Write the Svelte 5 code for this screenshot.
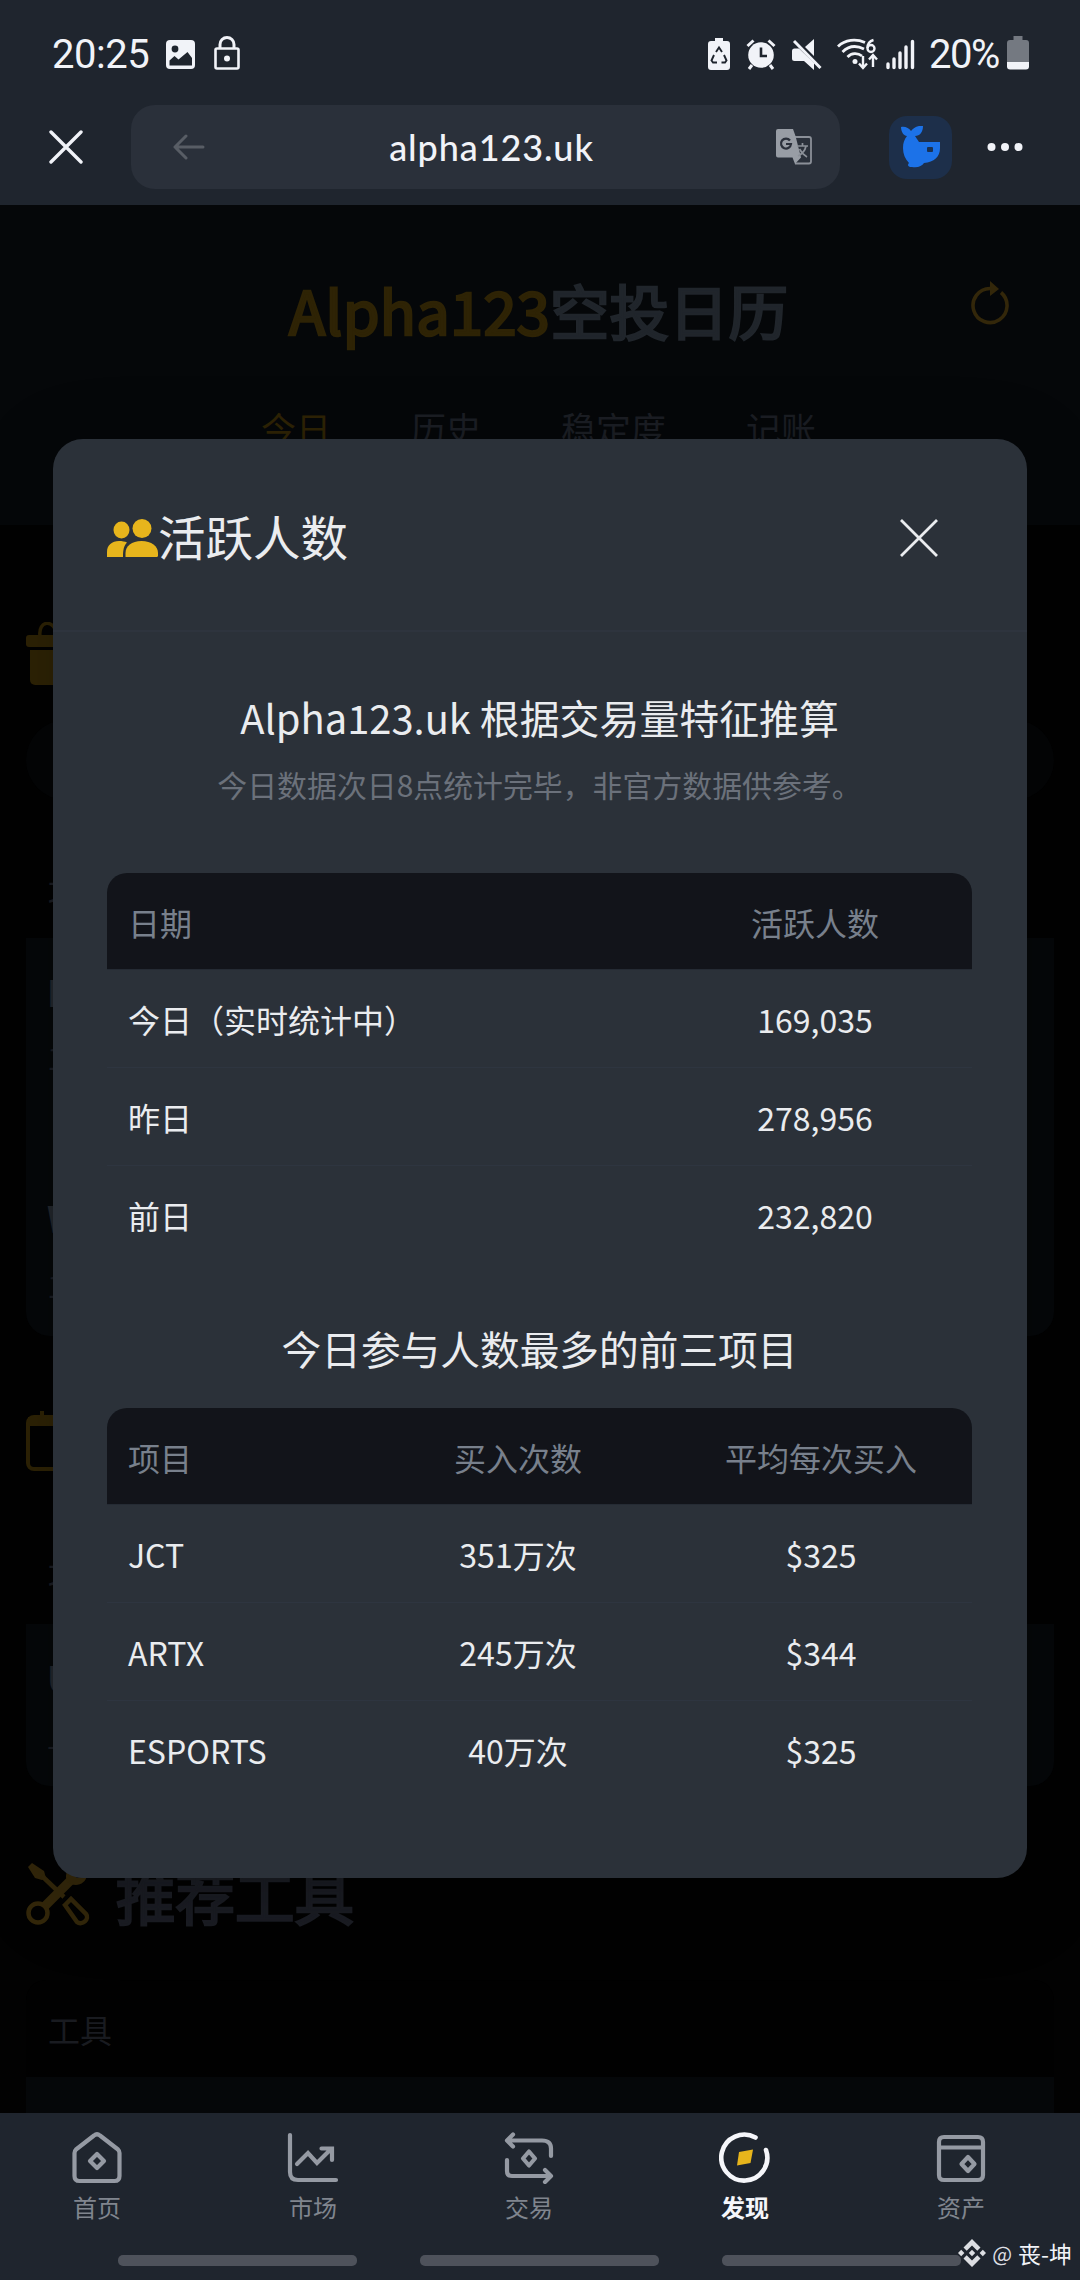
<script>
	let days = [
		{ date: "今日（实时统计中）", count: "169,035" },
		{ date: "昨日", count: "278,956" },
		{ date: "前日", count: "232,820" },
	];

	let projects = [
		{ name: "JCT", buys: "351万次", avg: "$325" },
		{ name: "ARTX", buys: "245万次", avg: "$344" },
		{ name: "ESPORTS", buys: "40万次", avg: "$325" },
	];

	let tabs = ["今日", "历史", "稳定度", "记账"];

	let navItems = [
		{ id: "home", label: "首页" },
		{ id: "market", label: "市场" },
		{ id: "trade", label: "交易" },
		{ id: "discover", label: "发现" },
		{ id: "assets", label: "资产" },
	];

	let activeTab = "今日";
	let activeNav = "discover";
	let showModal = true;
</script>

<div class="phone">
	<div class="status">
		<span class="time">20:25</span>
		<svg class="pic" width="29" height="29" viewBox="0 0 29 29">
			<rect width="29" height="29" rx="4" fill="#f1f3f8" />
			<circle cx="9" cy="9" r="3.4" fill="#1f252e" />
			<path d="M3.5 20.5 8.5 16l4 3.5L21.500 12l4.500 6v7.500h-22.500z" fill="#1f252e" />
		</svg>
		<svg class="lock" width="26" height="34" viewBox="0 0 26 34" fill="none" stroke="#f1f3f8">
			<path d="M6 12V8.500a7 7 0 0 1 14 0V12" stroke-width="3" />
			<rect x="1.500" y="12.500" width="23" height="20" rx="1.500" stroke-width="2.600" />
			<circle cx="13" cy="22.500" r="3" fill="#f1f3f8" stroke="none" />
		</svg>

		<div class="signals">
			<svg width="22" height="32" viewBox="0 0 22 32">
				<path d="M7 0h8v3h4a3 3 0 0 1 3 3v23a3 3 0 0 1-3 3H3a3 3 0 0 1-3-3V6a3 3 0 0 1 3-3h4z" fill="#f1f3f8" />
				<path d="M8 14l3-4.500 3 4.500M16 17l2.500 5.500-1.500 2h-3.500M6 17l-2.500 5.500 1.500 2h4" fill="none" stroke="#1f252e" stroke-width="1.900" />
			</svg>
			<svg class="alarm" width="30" height="31" viewBox="0 0 30 31" fill="none" stroke="#f1f3f8">
				<circle cx="15" cy="16" r="12.800" fill="#f1f3f8" stroke="none" />
				<path d="M1.500 7 7.500 1.500M28.500 7l-6-5.500M6 26l-3 4M24 26l3 4" stroke-width="3" />
				<path d="M15 8.500V17h6" stroke="#1f252e" stroke-width="2.600" />
			</svg>
			<svg class="mute" width="30" height="31" viewBox="0 0 30 31">
				<path d="M2.500 9.500H7L22 24v7l-10-9H2.500A2.500 2.500 0 0 1 0 19.500V12a2.500 2.500 0 0 1 2.500-2.500zM22 0v17L13 8z" fill="#f1f3f8" />
				<path d="M2 2 28.500 29" stroke="#f1f3f8" stroke-width="3" />
			</svg>
			<svg class="wifi" width="41" height="32" viewBox="0 0 41 32" fill="none" stroke="#f1f3f8" stroke-width="2.800">
				<path d="M1 8.500C8 1.500 19 .5 28 4.500" />
				<path d="M5.500 14C11.500 8 19 7 27 11" />
				<path d="M10.500 19c4-4.200 10-4.500 14.500-1" />
				<circle cx="18" cy="23.500" r="2.500" fill="#f1f3f8" stroke="none" />
				<circle cx="34" cy="10.500" r="3.500" stroke-width="2.400" />
				<path d="M30.500 10C30.500 5 33 3 36.500 2" stroke-width="2.400" />
				<path d="M26 18v12m-4-4.500 4 4.500 4-4.500M36 29V17m-4 4.500 4-4.500 4 4.500" stroke-width="2.400" />
			</svg>
			<svg class="bars" width="29" height="31" viewBox="0 0 29 31" stroke="#f1f3f8" stroke-width="3.400" stroke-linecap="round">
				<path d="M2 25v3.500M8 20v8.500M14 14v14.500M20 8v20.500M26.500 2.500v26" />
			</svg>
			<span class="percent">20%</span>
			<svg class="batt" width="22" height="34" viewBox="0 0 22 34">
				<path d="M6.500 0h9v4H19a3 3 0 0 1 3 3v19H0V7a3 3 0 0 1 3-3h3.500z" fill="#747981" />
				<path d="M0 26h22v4.500a3 3 0 0 1-3 3H3a3 3 0 0 1-3-3z" fill="#f1f3f8" />
			</svg>
		</div>
	</div>

	<div class="browser">
		<svg class="quit" width="34" height="34" viewBox="0 0 34 34" stroke="#f1f3f8" stroke-width="3.400" stroke-linecap="round">
			<path d="M2 2l30 30M32 2 2 32" />
		</svg>
		<div class="address">
			<svg class="back" width="32" height="26" viewBox="0 0 32 26" fill="none" stroke="#585d65" stroke-width="3" stroke-linecap="round" stroke-linejoin="round">
				<path d="M13 2 2 13l11 11M2 13h28" />
			</svg>
			<span class="url">alpha123.uk</span>
			<svg class="translate" width="36" height="36" viewBox="0 0 36 36">
				<path d="M19 8h14a2 2 0 0 1 2 2v22.500a2 2 0 0 1-2 2H19" fill="none" stroke="#8b9098" stroke-width="1.800" />
				<path d="M2 0h15l2.500 7L25 28.500 19 35l-2.500-6.500H2a2 2 0 0 1-2-2V2a2 2 0 0 1 2-2z" fill="#989da5" />
				<path d="M14 11.500A5 5 0 1 0 15 15h-5" fill="none" stroke="#2b303b" stroke-width="2.200" />
				<path d="M21 17h11M26.500 14v3M30 17c-1 5-4 8-8 10M23.500 20c1.500 3 4 6 7.500 8" fill="none" stroke="#8b9098" stroke-width="1.700" />
			</svg>
		</div>
		<div class="whale">
			<svg width="40" height="42" viewBox="0 0 40 42">
				<path d="M0 1c4-1 8 1 10 4 2-3 7-6 12-5 0 6-3 10-8 10l4 6h21v6c0 9-6 14-16 15-2 3-6 5-12 4-4 0-5-2-3-4-4-4-6-9-6-15 0-5 1-8 4-12C3 10 0 6 0 1z" fill="#1c72e8" />
				<rect x="26" y="21" width="6" height="5" rx="1" fill="#1a3152" />
			</svg>
		</div>
		<svg class="more" width="36" height="10" viewBox="0 0 36 10" fill="#f1f3f8">
			<circle cx="4.500" cy="5" r="4" /><circle cx="18" cy="5" r="4" /><circle cx="31.500" cy="5" r="4" />
		</svg>
	</div>

	<main class="page">
		<header>
			<div class="title-row">
				<h1><span>Alpha123</span>空投日历</h1>
				<svg class="refresh" width="40" height="46" viewBox="0 0 40 46">
					<path d="M31 11.500A17 17 0 1 1 20 7.500" fill="none" stroke="#33270a" stroke-width="3.600" />
					<path d="M20 0l9 8-9 7z" fill="#33270a" />
				</svg>
			</div>
			<div class="tabs">
				{#each tabs as tab}
					<span class:active={tab === activeTab}>{tab}</span>
				{/each}
			</div>
		</header>

		<section class="airdrops">
			<svg class="gift" width="62" height="64" viewBox="0 0 62 64" fill="#2e2305">
				<path d="M14 14c-2-16 14-17 17-2 3-15 19-14 17 2" fill="none" stroke="#2e2305" stroke-width="3.500" />
				<rect y="13" width="62" height="12" rx="3" />
				<path d="M4 28h54v30a5 5 0 0 1-5 5H9a5 5 0 0 1-5-5z" />
			</svg>
			<div class="pill"></div>
			<div class="th">项</div>
			<div class="card tall">
				<b>B</b>
				<i>1</i>
				<b class="second">W</b>
				<i class="last">1</i>
			</div>
		</section>

		<section class="upcoming">
			<svg class="calendar" width="60" height="60" viewBox="0 0 60 60">
				<rect x="2" y="6" width="56" height="52" rx="6" fill="none" stroke="#2e2305" stroke-width="4" />
				<path d="M2 6h56v9H2zM14 0h4v8h-4zM42 0h4v8h-4z" fill="#2e2305" />
			</svg>
			<div class="th">项</div>
			<div class="card short">
				<b>U</b>
				<i>-</i>
			</div>
		</section>

		<section class="tools">
			<div class="tools-title">
				<svg width="64" height="64" viewBox="0 0 64 64" fill="none" stroke="#33270a" stroke-width="4.500">
					<path d="M2 5l4-4 12 8 2 7-4 2-7-2z" fill="#33270a" stroke="none" />
					<path d="M16 14l22 21" />
					<circle cx="12" cy="51" r="9.500" />
					<path d="M19 44 45 18" stroke-width="9" />
					<path d="M41 20c-3-8 1-16 9-17l-3 9 4 4 10-3c-1 8-9 12-16 9z" fill="#33270a" stroke="none" />
					<path d="M39 43l6-6 15 15c4 5-4 12-9 8z" />
				</svg>
				<h2>推荐工具</h2>
			</div>
			<div class="tools-head">工具</div>
			<div class="tools-body"></div>
		</section>
	</main>

	{#if showModal}
		<div class="modal">
			<div class="modal-head">
				<svg width="51" height="38" viewBox="0 0 51 38" fill="#e7b51c">
					<ellipse cx="14.500" cy="11" rx="8" ry="8.500" />
					<path d="M0 38v-5c0-7 5-11 12-11 3 0 6 .5 8 1.500-3 3-4 7-4 14.500z" />
					<circle cx="35" cy="9.500" r="9.500" />
					<path d="M18.500 38v-4c0-7 6-12 16-12s16.500 5 16.500 12v2.500a1.500 1.500 0 0 1-1.500 1.500z" />
				</svg>
				<h3>活跃人数</h3>
				<button aria-label="close" on:click={() => (showModal = false)}>
					<svg width="38" height="38" viewBox="0 0 38 38" stroke="#eaecef" stroke-width="2.800">
						<path d="M1 1l36 36M37 1 1 37" />
					</svg>
				</button>
			</div>
			<div class="modal-body">
				<p class="lead">Alpha123.uk 根据交易量特征推算</p>
				<p class="note">今日数据次日8点统计完毕，非官方数据供参考。</p>

				<div class="table two">
					<div class="row head">
						<span>日期</span><span>活跃人数</span>
					</div>
					{#each days as day}
						<div class="row">
							<span>{day.date}</span><span>{day.count}</span>
						</div>
					{/each}
				</div>

				<p class="sub">今日参与人数最多的前三项目</p>

				<div class="table three">
					<div class="row head">
						<span>项目</span><span>买入次数</span><span>平均每次买入</span>
					</div>
					{#each projects as project}
						<div class="row">
							<span>{project.name}</span><span>{project.buys}</span><span>{project.avg}</span>
						</div>
					{/each}
				</div>
			</div>
		</div>
	{/if}

	<nav>
		<div class="items">
			{#each navItems as item}
				<div class="item" class:on={item.id === activeNav}>
					<svg width="52" height="52" viewBox="0 0 52 52" fill="none" stroke="#959aa3" stroke-width="4.200" stroke-linecap="round" stroke-linejoin="round">
						{#if item.id === "home"}
							<path d="M23 3.500 5 17.500Q3.500 19 3.500 21v23q0 5 5 5h35q5 0 5-5V21q0-2-1.500-3.500L29 3.500q-3-2.500-6 0z" />
							<path d="M26 22l7 7-7 7-7-7z" />
						{:else if item.id === "market"}
							<path d="M3 3v37q0 8 8 8h38" />
							<path d="M10 32l11-11 9 10L44 17M34.500 16.500H45V28" stroke-linejoin="miter" />
						{:else if item.id === "trade"}
							<path d="M5 8.500h34q9 0 9 8V24M10 2.500 4 8.500l6 6M4 28v11q0 5 5 5h38M42 38l6 6-6 6" />
							<path d="M26 19.500l6 7-6 7-6-7z" />
						{:else if item.id === "discover"}
							<path d="M36.500 5.500A23 23 0 1 0 47 18" stroke="#f5f6fa" stroke-width="4.600" />
							<path d="M20 20l14-2.500-2.500 13.500-13.500 2.500z" fill="#e7b51c" stroke="none" />
						{:else}
							<path d="M9 5h34q5 0 5 5v33q0 5-5 5H9q-5 0-5-5V10q0-5 5-5zM4 15.500h44" />
							<path d="M33 25l6.500 7-6.500 7-6.500-7z" />
						{/if}
					</svg>
					<span>{item.label}</span>
				</div>
			{/each}
		</div>
		<div class="handles">
			<i></i><i></i><i></i>
		</div>
		<div class="mark">
			<svg width="28" height="28" viewBox="0 0 28 28" fill="#dcdee2">
				<path d="M14 0l8.500 8.500-3.200 3.200L14 6.400l-5.300 5.300-3.200-3.200zM14 28l8.500-8.500-3.200-3.200-5.300 5.300-5.300-5.300-3.200 3.200zM3.200 10.800 6.400 14l-3.200 3.200L0 14zM24.800 10.800 28 14l-3.200 3.200-3.200-3.200zM14 10.800l3.200 3.200-3.200 3.200-3.200-3.200z" />
			</svg>
			<span class="at">@</span>
			<span>丧-坤</span>
		</div>
	</nav>
</div>

<style>
	:global(body) {
		margin: 0;
		background: #020202;
	}

	.phone {
		position: relative;
		display: flex;
		flex-direction: column;
		width: 1080px;
		height: 2280px;
		overflow: hidden;
		background: #020202;
		font-family: "Noto Sans CJK SC", sans-serif;
	}

	svg {
		display: block;
		flex: none;
	}

	h1, h2, h3, p {
		margin: 0;
		font-weight: 400;
	}

	/* status bar */
	.status {
		display: flex;
		align-items: center;
		flex: none;
		box-sizing: border-box;
		height: 105px;
		padding: 3px 51px 0 52px;
		background: #1f252e;
		color: #f1f3f8;
		font-family: Roboto, sans-serif;
		font-size: 40px;
	}
	.time {
		width: 98px;
		letter-spacing: -0.5px;
	}
	.pic {
		margin-left: 16px;
	}
	.lock {
		margin: 0 0 2px 19px;
	}
	.signals {
		display: flex;
		align-items: center;
		margin-left: auto;
	}
	.alarm {
		margin-left: 16px;
	}
	.mute {
		margin-left: 16px;
	}
	.wifi {
		margin-left: 15px;
	}
	.bars {
		margin-left: 8px;
	}
	.percent {
		width: 71px;
		margin-left: 14px;
		letter-spacing: -1.5px;
	}
	.batt {
		margin: 0 0 2px 7px;
	}

	/* in-app browser bar */
	.browser {
		display: flex;
		align-items: center;
		flex: none;
		box-sizing: border-box;
		height: 100px;
		padding: 0 0 16px 49px;
		background: #1f252e;
	}
	.address {
		display: flex;
		align-items: center;
		box-sizing: border-box;
		width: 709px;
		height: 84px;
		margin-left: 48px;
		padding: 0 28px 0 42px;
		border-radius: 24px;
		background: #2a303a;
	}
	.url {
		flex: 1;
		padding-left: 2px;
		color: #f1f3f8;
		font: 500 36px Lato, sans-serif;
		letter-spacing: 0.9px;
		text-align: center;
	}
	.whale {
		display: grid;
		place-items: center;
		width: 63px;
		height: 63px;
		margin-left: 49px;
		border-radius: 18px;
		background: #1d2f4a;
	}
	.more {
		margin-left: 35px;
	}

	/* dimmed page under the modal */
	.page {
		display: flex;
		flex-direction: column;
		flex: none;
		height: 1908px;
		overflow: hidden;
	}
	header {
		flex: none;
		height: 320px;
		background: #050709;
	}
	.title-row {
		display: grid;
		grid-template-columns: 289px 1fr 110px;
		align-items: center;
		height: 90px;
		padding-top: 59px;
	}
	/* faux bold: regular glyphs with a stroke */
	h1, h2 {
		color: #20252b;
		font-size: 59.500px;
		line-height: 90px;
		white-space: nowrap;
		-webkit-text-stroke: 2.6px currentColor;
	}
	h1 {
		grid-column: 2;
	}
	h1 span {
		color: #2e2305;
		letter-spacing: 0.3px;
	}
	.refresh {
		margin-bottom: 10px;
	}
	.tabs {
		display: flex;
		gap: 80px;
		padding: 52px 0 0 261px;
		color: #1b1e24;
		font-size: 35px;
		line-height: 44px;
	}
	.tabs .active {
		color: #2e2305;
	}
	section {
		flex: none;
		padding: 0 26px;
	}
	.airdrops {
		height: 811px;
	}
	.gift {
		padding-top: 97px;
	}
	.pill {
		height: 80px;
		margin-top: 34px;
		border-radius: 40px;
		background: #040506;
	}
	.th {
		height: 50px;
		margin-top: 67px;
		padding-left: 22px;
		color: #1a1c22;
		font-size: 32px;
		line-height: 50px;
	}
	.card {
		display: flex;
		flex-direction: column;
		box-sizing: border-box;
		padding-left: 21px;
		border-radius: 0 0 24px 24px;
		background: #050709;
		color: #22262c;
		font-size: 36px;
		line-height: 50px;
	}
	.card i {
		margin-top: 16px;
		color: #1a1c22;
		font-size: 30px;
		font-style: normal;
	}
	.tall {
		height: 398px;
		margin-top: 21px;
		padding-top: 28px;
	}
	.card .second {
		margin-top: 110px;
	}
	.card .last {
		margin-top: 18px;
	}
	.upcoming {
		height: 503px;
	}
	.calendar {
		padding-top: 75px;
	}
	.upcoming .th {
		margin-top: 79px;
	}
	.short {
		height: 162px;
		margin-top: 24px;
		padding-top: 28px;
	}
	.tools-title {
		display: flex;
		align-items: center;
		gap: 26px;
		height: 122px;
		margin-top: -6px;
	}
	h2 {
		color: #1b1d24;
	}
	.tools-head {
		height: 97px;
		margin-top: 25px;
		padding-left: 22px;
		border-radius: 20px 20px 0 0;
		background: #010101;
		color: #191b20;
		font-size: 32px;
		line-height: 99px;
	}
	.tools-body {
		height: 60px;
		background: #050709;
	}

	.modal {
		position: absolute;
		top: 439px;
		left: 53px;
		box-sizing: border-box;
		width: 974px;
		height: 1439px;
		border-radius: 30px;
		background: #2b3139;
		box-shadow: 0 20px 80px rgba(0, 0, 0, 0.25);
		color: #eaecef;
	}
	.modal-head {
		display: flex;
		align-items: center;
		box-sizing: border-box;
		height: 193px;
		padding: 6px 89px 0 54px;
		border-bottom: 2px solid #2e343e;
	}
	h3 {
		padding-bottom: 3px;
		font-size: 47.500px;
		line-height: 60px;
	}
	button {
		margin-left: auto;
		padding: 0;
		border: 0;
		background: none;
	}
	.modal-body {
		padding: 0 55px 0 54px;
	}
	.lead {
		padding-top: 55px;
		font-size: 39.900px;
		line-height: 60px;
		text-align: center;
	}
	.note {
		padding-top: 14px;
		color: #6b717b;
		font-size: 29.900px;
		line-height: 46px;
		text-align: center;
	}
	.table {
		font-size: 32px;
	}
	.two {
		margin-top: 66px;
	}
	.row {
		display: grid;
		align-items: center;
		box-sizing: border-box;
		height: 98px;
		border-bottom: 1px solid #2e3540;
		line-height: 46px;
	}
	.row:last-child {
		border-bottom-color: transparent;
	}
	.two .row {
		grid-template-columns: 551px 314px;
	}
	.three .row {
		grid-template-columns: 259px 304px 302px;
	}
	.row span {
		text-align: center;
	}
	.row span:first-child {
		padding-left: 21px;
		text-align: left;
	}
	.row.head {
		height: 97px;
		padding-top: 1px;
		border-bottom: 1px solid #252b34;
		border-radius: 20px 20px 0 0;
		background: #12141a;
		color: #78808c;
	}
	.sub {
		padding-top: 54px;
		font-size: 39.700px;
		line-height: 60px;
		text-align: center;
	}
	.three {
		margin-top: 30px;
	}

	/* bottom navigation */
	nav {
		position: relative;
		flex: none;
		height: 167px;
		background: #1f252e;
	}
	.items {
		display: grid;
		grid-template-columns: repeat(5, 216px);
		margin-left: -11px;
		padding-top: 19px;
	}
	.item {
		display: flex;
		flex-direction: column;
		align-items: center;
		color: #80858e;
		font-size: 24px;
		line-height: 34px;
	}
	.item span {
		padding-top: 6px;
	}
	.item.on {
		color: #f5f6fa;
		font-weight: 700;
	}
	.handles {
		display: flex;
		gap: 63px;
		padding: 31px 0 0 118px;
	}
	.handles i {
		width: 239px;
		height: 11px;
		border-radius: 5px;
		background: #4e525b;
	}
	.mark {
		position: absolute;
		right: 8px;
		bottom: 9px;
		display: flex;
		align-items: center;
		height: 36px;
		color: #f1f3f8;
		font-size: 23px;
	}
	.mark .at {
		margin: 0 6px 0 6px;
		color: #dcdee2;
		font-size: 21px;
	}
</style>
